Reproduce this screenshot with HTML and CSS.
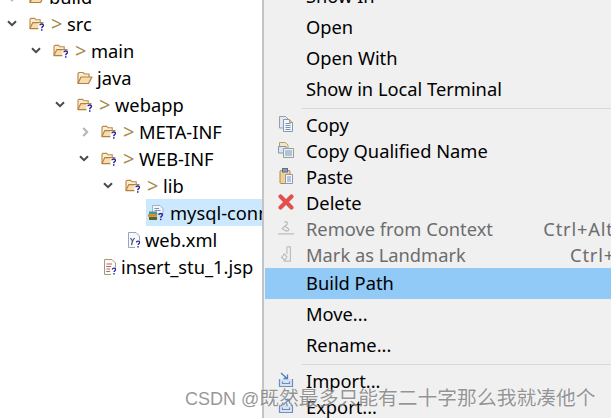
FILE: index.html
```html
<!DOCTYPE html>
<html lang="en">
<head>
<meta charset="utf-8">
<title>Project Explorer context menu</title>
<link rel="stylesheet" href="styles.css">
</head>
<body>
<svg class="defs" width="0" height="0" aria-hidden="true">
  <defs>
    <symbol id="down" viewBox="0 0 10 7"><path d="M1 1.2 5 5.2 9 1.2" fill="none" stroke="#4a4a4a" stroke-width="2"/></symbol>
    <symbol id="right" viewBox="0 0 7 10"><path d="M1.2 1 5.2 5 1.2 9" fill="none" stroke="#b4b4b4" stroke-width="2"/></symbol>
    <symbol id="q" viewBox="0 0 6 9"><path d="M1 2.6C1 .6 5 .6 5 2.6 5 4.2 3 4 3 5.8" fill="none" stroke="#23239c" stroke-width="1.5"/><rect x="2.2" y="7" width="1.7" height="1.7" fill="#23239c"/></symbol>
    <symbol id="folder" viewBox="0 0 16 14">
      <path d="M1 12.5V2.5L2 1.5H6L7.5 3H12V6" fill="#fbeed0" stroke="#b88a4e" stroke-width="1.2"/>
      <path d="M1 12.5 4 6H15L11.5 12.5Z" fill="#f7dcae" stroke="#b5803f" stroke-width="1.2" stroke-linejoin="round"/>
    </symbol>
    <symbol id="folderq" viewBox="0 0 16 14">
      <use href="#folder" width="15" height="13"/>
      <rect x="9.4" y="6.4" width="6.6" height="7.6" fill="#fff"/>
      <use href="#q" x="10" y="6" width="5.4" height="8"/>
    </symbol>
    <symbol id="xml" viewBox="0 0 14 16">
      <path d="M1.5.5H9L12.5 4V15.5H1.5Z" fill="#f8f9fb" stroke="#9aa5b8"/>
      <path d="M3.5 6 5.5 9 7.5 6M5.5 9 4.5 13" fill="none" stroke="#46557a" stroke-width="1.2"/>
      <rect x="8" y="8.6" width="6" height="7.4" fill="#fff"/>
      <use href="#q" x="8.5" y="8" width="5" height="8"/>
    </symbol>
    <symbol id="jsp" viewBox="0 0 14 16">
      <path d="M1.5.5H9L12.5 4V15.5H1.5Z" fill="#fbfbf6" stroke="#a59a78"/>
      <path d="M3.5 5H9M3.5 7.5H8M3.5 10H7M3.5 12.5H7" stroke="#d55a5a"/>
      <path d="M3.5 7.5H6M3.5 12.5H5" stroke="#5b7fc0"/>
      <rect x="8" y="8.6" width="6" height="7.4" fill="#fff"/>
      <use href="#q" x="8.5" y="8" width="5" height="8"/>
    </symbol>
    <symbol id="jar" viewBox="0 0 16 16">
      <path d="M4.5.5H12L15 3.5V9H4.5Z" fill="#f3f5fa" stroke="#a7b0c2"/>
      <path d="M6.5 3.5H11M6.5 5.5H12.5" stroke="#6f8fc0"/>
      <rect x="1" y="6.5" width="8" height="2.6" fill="#3f9a8c"/>
      <rect x="0" y="9.2" width="9" height="2.6" fill="#d9852f"/>
      <rect x="1" y="12" width="8" height="3" fill="#4c6b2a"/>
      <use href="#q" x="10" y="7.5" width="5.4" height="8"/>
    </symbol>
    <symbol id="copy" viewBox="0 0 16 16">
      <path d="M1.5.5H7.5L10 3V12H1.5Z" fill="#e2e9f2" stroke="#93a0b0"/>
      <path d="M5.5 3.5H11.5L14.5 6.5V15.5H5.5Z" fill="#f4f6fa" stroke="#8c99a8"/>
      <path d="M7.5 7.5H12.5M7.5 9.5H12.5M7.5 11.5H12.5M7.5 13.5H12.5" stroke="#6f93c2"/>
      <path d="M11.5 3.5V6.5H14.5" fill="#e0c38a" stroke="#b59b62"/>
    </symbol>
    <symbol id="copyq" viewBox="0 0 16 16">
      <path d="M1.5.5H7.5L10 3V10H1.5Z" fill="#f2e6c8" stroke="#b59f6a"/>
      <path d="M.5 4.5H8V11H.5Z" fill="#dbe4f0" stroke="#8496ad"/>
      <path d="M5.5 6.5H15.5V15.5H5.5Z" fill="#eef2f7" stroke="#9a9f8e"/>
      <path d="M7 9H14M7 11H14M7 13H14" stroke="#6f93c2"/>
    </symbol>
    <symbol id="paste" viewBox="0 0 14 16">
      <rect x="1" y="2.500" width="10" height="13" rx="1" fill="#f2cf94" stroke="#b08a50"/>
      <rect x="3.500" y=".5" width="5" height="3.500" fill="#8c9cb3" stroke="#5f7088"/>
      <path d="M6.500 6.500H13.500V15.500H6.500Z" fill="#f6f8fb" stroke="#8b98a8"/>
      <path d="M8 9H12M8 11H12M8 13H12" stroke="#6f93c2"/>
    </symbol>
    <symbol id="delete" viewBox="0 0 14 14"><path d="M2.200 2.200 11.800 11.800M11.800 2.200 2.200 11.800" stroke="#e2504e" stroke-width="3.600" stroke-linecap="round"/></symbol>
    <symbol id="remove" viewBox="0 0 15 14"><path d="M6 1.500C8 .5 9.500 2 8.500 3.500L6.500 5.500 9.500 7.500C11 8.500 9 10.500 7 9.500L4 7.500 6.500 5M0 12.500H15" fill="none" stroke="#bdbdbd" stroke-width="1.200"/></symbol>
    <symbol id="mark" viewBox="0 0 12 18"><path d="M7 1H11V17H3M1 13 4 9 7 12 5 16ZM7 1V9" fill="none" stroke="#bdbdbd" stroke-width="1.300"/></symbol>
    <symbol id="import" viewBox="0 0 16 16"><path d="M1.500 7V14.500H14.500V7M4.500 9.500V11.500H11.500V9.500" fill="#d8e3f2" stroke="#6e8fbd" stroke-width="1.200"/><path d="M3 1 9 6.500M9.500 2.500V6.500H5.500" fill="none" stroke="#4f7fb8" stroke-width="1.300"/></symbol>
    <symbol id="export" viewBox="0 0 16 16"><path d="M1.500 7V14.500H14.500V7M4.500 9.500V11.500H11.500V9.500" fill="#d8e3f2" stroke="#6e8fbd" stroke-width="1.200"/><path d="M5 7 11 1.500M7 1.500H11.500V5.500" fill="none" stroke="#4f7fb8" stroke-width="1.300"/></symbol>
  </defs>
</svg>

<main class="page">
  <section class="tree">
    <div class="row first d0"><span class="twisty"><svg class="chev-r"><use href="#right"/></svg></span><svg class="ico-folder"><use href="#folder"/></svg><span class="name plain">build</span></div>
    <div class="row d0"><span class="twisty"><svg class="chev-d"><use href="#down"/></svg></span><svg class="ico-folder"><use href="#folderq"/></svg><span class="dirty">&gt;</span><span class="name">src</span></div>
    <div class="row d1"><span class="twisty"><svg class="chev-d"><use href="#down"/></svg></span><svg class="ico-folder"><use href="#folderq"/></svg><span class="dirty">&gt;</span><span class="name">main</span></div>
    <div class="row d2"><span class="twisty"></span><svg class="ico-folder"><use href="#folder"/></svg><span class="name plain">java</span></div>
    <div class="row d2"><span class="twisty"><svg class="chev-d"><use href="#down"/></svg></span><svg class="ico-folder"><use href="#folderq"/></svg><span class="dirty">&gt;</span><span class="name">webapp</span></div>
    <div class="row d3"><span class="twisty"><svg class="chev-r"><use href="#right"/></svg></span><svg class="ico-folder"><use href="#folderq"/></svg><span class="dirty">&gt;</span><span class="name">META-INF</span></div>
    <div class="row d3"><span class="twisty"><svg class="chev-d"><use href="#down"/></svg></span><svg class="ico-folder"><use href="#folderq"/></svg><span class="dirty">&gt;</span><span class="name">WEB-INF</span></div>
    <div class="row d4"><span class="twisty"><svg class="chev-d"><use href="#down"/></svg></span><svg class="ico-folder"><use href="#folderq"/></svg><span class="dirty">&gt;</span><span class="name">lib</span></div>
    <div class="row d5"><span class="twisty short"></span><div class="selected"><svg class="ico-jar"><use href="#jar"/></svg><span class="name">mysql-connector-java.jar</span></div></div>
    <div class="row d4"><span class="twisty"></span><svg class="ico-file"><use href="#xml"/></svg><span class="name">web.xml</span></div>
    <div class="row d3"><span class="twisty"></span><svg class="ico-file"><use href="#jsp"/></svg><span class="name">insert_stu_1.jsp</span></div>
  </section>

  <nav class="menu">
    <div class="item tall cut"><span class="gutter"></span><span class="label">Show In</span></div>
    <div class="item tall"><span class="gutter"></span><span class="label">Open</span></div>
    <div class="item tall"><span class="gutter"></span><span class="label">Open With</span></div>
    <div class="item tall"><span class="gutter"></span><span class="label">Show in Local Terminal</span></div>
    <div class="sep sep-a"></div>
    <div class="item"><span class="gutter"><svg class="mi"><use href="#copy"/></svg></span><span class="label">Copy</span></div>
    <div class="item"><span class="gutter"><svg class="mi"><use href="#copyq"/></svg></span><span class="label">Copy Qualified Name</span></div>
    <div class="item"><span class="gutter"><svg class="mi"><use href="#paste"/></svg></span><span class="label">Paste</span></div>
    <div class="item"><span class="gutter"><svg class="mi"><use href="#delete"/></svg></span><span class="label">Delete</span></div>
    <div class="item off"><span class="gutter"><svg class="mi"><use href="#remove"/></svg></span><span class="label">Remove from Context</span><span class="keys">Ctrl+Alt+Shift+Down</span></div>
    <div class="item off"><span class="gutter"><svg class="mi"><use href="#mark"/></svg></span><span class="label">Mark as Landmark</span><span class="keys">Ctrl+Alt+Shift+Up</span></div>
    <div class="item tall active"><span class="gutter"></span><span class="label">Build Path</span></div>
    <div class="item tall"><span class="gutter"></span><span class="label">Move...</span></div>
    <div class="item tall"><span class="gutter"></span><span class="label">Rename...</span></div>
    <div class="sep sep-b"></div>
    <div class="item"><span class="gutter"><svg class="mi"><use href="#import"/></svg></span><span class="label">Import...</span></div>
    <div class="item"><span class="gutter"><svg class="mi"><use href="#export"/></svg></span><span class="label">Export...</span></div>
  </nav>

  <div class="watermark">CSDN @<span class="wm-cjk">既然最多只能有二十字那么我就凑他个</span></div>
</main>
</body>
</html>
```
FILE: styles.css
```css
* { box-sizing: border-box; }
html, body { margin: 0; padding: 0; background: #fff; }
.defs { position: absolute; }
.page {
  position: relative;
  display: flex;
  width: 611px;
  height: 418px;
  overflow: hidden;
  font-family: "Noto Sans", "Noto Sans CJK SC", sans-serif;
  font-size: 18.3px;
  color: #000;
}

/* tree */
.tree { flex: none; width: 262px; background: #fff; }
.row { display: flex; align-items: center; height: 27px; white-space: nowrap; overflow: hidden; }
.row.first { margin-top: -17px; }
.d0 { padding-left: 5px; }
.d1 { padding-left: 29px; }
.d2 { padding-left: 53px; }
.d3 { padding-left: 77px; }
.d4 { padding-left: 101px; }
.d5 { padding-left: 125px; }
.twisty { flex: none; width: 24px; display: flex; align-items: center; padding-left: 2px; }
.twisty.short { width: 21px; }
.chev-d { width: 10px; height: 7px; }
.chev-r { width: 7px; height: 10px; margin-left: 3px; }
.ico-folder { flex: none; width: 16px; height: 14px; }
.ico-file { flex: none; width: 14px; height: 16px; margin-left: 2px; }
.ico-jar { flex: none; width: 16px; height: 16px; margin-left: 2px; }
.dirty { margin-left: 6px; width: 16px; color: #a98a50; flex: none; font-size: 20px; }
.name { flex: none; }
.name.plain { margin-left: 4px; }
.ico-file + .name { margin-left: 4px; }
.selected { flex: 1; display: flex; align-items: center; height: 27px; background: #cce8ff; gap: 6px; overflow: hidden; }

/* menu */
.menu { flex: none; width: 480px; background: #f0f0f0; border-left: 2px solid #c4c4c4; padding-left: 1px; }
.item { display: flex; align-items: center; height: 26px; padding-bottom: 2px; white-space: nowrap; }
.item.tall { height: 31px; }
.item.cut { margin-top: -19px; }
.gutter { flex: none; width: 41px; display: flex; align-items: center; padding-left: 13px; }
.mi { width: 16px; height: 16px; }
.label { flex: none; }
.keys { margin-left: auto; padding-right: 10px; letter-spacing: 0.8px; }
.off { color: #6d6d6d; }
.active { background: #91c9f7; }
.sep { height: 1px; background: #d7d7d7; margin-left: 37px; }
.sep-a { margin-top: 3px; margin-bottom: 3px; }
.sep-b { margin-top: 3px; margin-bottom: 3px; }

/* watermark */
.watermark {
  position: absolute;
  left: 185px;
  top: 385px;
  font-family: "Liberation Sans", "Noto Sans CJK SC", sans-serif;
  font-size: 18px;
  line-height: 26px;
  white-space: nowrap;
  color: rgba(110, 110, 110, 0.72);
  text-shadow: 0 0 2px rgba(255, 255, 255, 0.7);
}
.wm-cjk { font-size: 19.8px; }
```
